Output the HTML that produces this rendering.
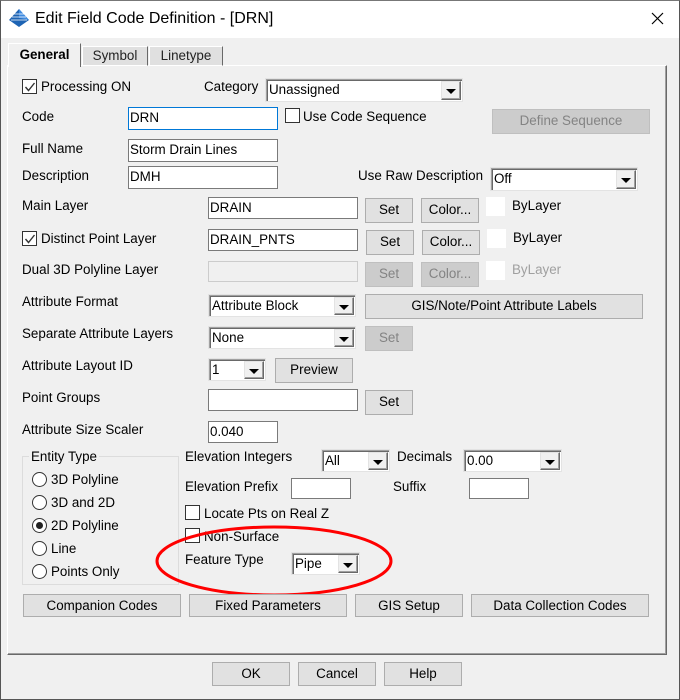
<!DOCTYPE html>
<html><head><meta charset="utf-8"><style>
*{box-sizing:border-box;margin:0;padding:0}
body{width:680px;height:700px;background:#f0f0f0;font-family:"Liberation Sans",Arial,sans-serif;font-size:13.4px;color:#000;position:relative;overflow:hidden}
.a{position:absolute;white-space:nowrap}
.l{position:absolute;white-space:nowrap;line-height:15px}
.in{position:absolute;background:#fff;border:1px solid #7a7a7a;padding:2px 1px;line-height:15px}
.in.dis{background:#f0f0f0;border-color:#ccc}
.btn{position:absolute;background:#e1e1e1;border:1px solid #adadad;text-align:center;line-height:21px}
.btn.dis{background:#ccc;border-color:#bfbfbf;color:#838383}
.sel{position:absolute;background:#fff;border:1px solid #e3e3e3;box-shadow:inset 1px 1px 0 #a0a0a0,inset 2px 2px 0 #696969;padding:3px 3px;line-height:15px}
.sel .ar{position:absolute;right:1px;top:2px;bottom:1px;width:20px;background:#f0f0f0;border-top:1px solid #e3e3e3;border-left:1px solid #e3e3e3;border-right:1px solid #696969;border-bottom:1px solid #696969;box-shadow:inset -1px -1px 0 #a0a0a0}
.sel .ar:after{content:"";position:absolute;left:4px;top:7px;border-left:5px solid transparent;border-right:5px solid transparent;border-top:5px solid #000}
.cb{position:absolute;width:15px;height:15px;border:1px solid #333;background:#fff}
.rd{position:absolute;width:15px;height:15px;border:1px solid #333;border-radius:50%;background:#fff}
.wb{position:absolute;width:19px;height:19px;background:#fff}
</style></head><body>
<div class="a" style="left:0;top:0;width:680px;height:38px;background:#fff"></div>
<svg class="a" style="left:9px;top:9px" width="20" height="18" viewBox="0 0 20 18"><polygon points="10,0 20,11 10,18 0,11" fill="#1e64b4"/><polygon points="10,0 20,11 10,9" fill="#3f8be0"/><path d="M3,8 H17 M5,5 H15 M2,11H18" stroke="#fff" stroke-width="0.8"/></svg>
<div class="a" style="left:35px;top:9px;font-size:16px;line-height:20px">Edit Field Code Definition - [DRN]</div>
<svg class="a" style="left:651px;top:12px" width="13" height="13"><path d="M1,1L12,12M12,1L1,12" stroke="#000" stroke-width="1.2"/></svg>
<div class="a" style="left:0;top:0;width:680px;height:700px;border:1px solid #555;border-top:1px solid #777"></div>
<div class="a" style="left:7px;top:65px;width:660px;height:590px;border:1px solid #fff;border-right-color:#696969;border-bottom-color:#696969;box-shadow:inset -1px -1px 0 #a0a0a0"></div>
<div class="a" style="left:82px;top:46px;width:66px;height:20px;background:#e0e0e0;border:1px solid #fff;border-right-color:#696969;text-align:center;line-height:18px;color:#222">Symbol</div>
<div class="a" style="left:149px;top:46px;width:74px;height:20px;background:#e0e0e0;border:1px solid #fff;border-right-color:#696969;text-align:center;line-height:18px;color:#222">Linetype</div>
<div class="a" style="left:8px;top:43px;width:73px;height:24px;background:#f0f0f0;border:1px solid #fff;border-bottom:none;border-right-color:#696969;text-align:center;line-height:22px;font-weight:bold">General</div>

<div class="cb" style="left:22px;top:79px"></div><svg class="a" style="left:24px;top:81px" width="12" height="12"><path d="M1.5,6 L4.5,9.5 L10.5,2" stroke="#333" stroke-width="1.4" fill="none"/></svg>
<div class="l" style="left:41px;top:79px">Processing ON</div>
<div class="l" style="left:204px;top:79px">Category</div>
<div class="sel" style="left:265px;top:78px;width:198px;height:24px">Unassigned<div class="ar"></div></div>

<div class="l" style="left:22px;top:109px">Code</div>
<div class="in" style="left:128px;top:107px;width:150px;height:23px;border-color:#0078d7">DRN</div>
<div class="cb" style="left:285px;top:108px"></div>
<div class="l" style="left:303px;top:109px">Use Code Sequence</div>
<div class="btn dis" style="left:492px;top:109px;width:158px;height:25px">Define Sequence</div>

<div class="l" style="left:22px;top:141px">Full Name</div>
<div class="in" style="left:128px;top:139px;width:150px;height:23px">Storm Drain Lines</div>
<div class="l" style="left:22px;top:168px">Description</div>
<div class="in" style="left:128px;top:166px;width:150px;height:23px">DMH</div>
<div class="l" style="left:358px;top:168px">Use Raw Description</div>
<div class="sel" style="left:490px;top:167px;width:148px;height:24px">Off<div class="ar"></div></div>

<div class="l" style="left:22px;top:198px">Main Layer</div>
<div class="in" style="left:208px;top:197px;width:150px;height:22px">DRAIN</div>
<div class="btn" style="left:365px;top:198px;width:48px;height:25px">Set</div>
<div class="btn" style="left:421px;top:198px;width:58px;height:25px">Color...</div>
<div class="wb" style="left:486px;top:197px"></div><div class="l" style="left:512px;top:198px">ByLayer</div>

<div class="cb" style="left:22px;top:231px"></div><svg class="a" style="left:24px;top:233px" width="12" height="12"><path d="M1.5,6 L4.5,9.5 L10.5,2" stroke="#333" stroke-width="1.4" fill="none"/></svg>
<div class="l" style="left:41px;top:231px">Distinct Point Layer</div>
<div class="in" style="left:208px;top:229px;width:150px;height:22px">DRAIN_PNTS</div>
<div class="btn" style="left:366px;top:230px;width:48px;height:25px">Set</div>
<div class="btn" style="left:422px;top:230px;width:58px;height:25px">Color...</div>
<div class="wb" style="left:487px;top:229px"></div><div class="l" style="left:513px;top:230px">ByLayer</div>

<div class="l" style="left:22px;top:262px">Dual 3D Polyline Layer</div>
<div class="in dis" style="left:208px;top:261px;width:150px;height:21px"></div>
<div class="btn dis" style="left:365px;top:262px;width:48px;height:25px">Set</div>
<div class="btn dis" style="left:421px;top:262px;width:58px;height:25px">Color...</div>
<div class="wb" style="left:486px;top:261px"></div><div class="l" style="left:512px;top:262px;color:#a0a0a0">ByLayer</div>

<div class="l" style="left:22px;top:294px">Attribute Format</div>
<div class="sel" style="left:208px;top:294px;width:148px;height:23px">Attribute Block<div class="ar"></div></div>
<div class="btn" style="left:365px;top:294px;width:278px;height:25px">GIS/Note/Point Attribute Labels</div>

<div class="l" style="left:22px;top:326px">Separate Attribute Layers</div>
<div class="sel" style="left:208px;top:326px;width:148px;height:23px">None<div class="ar"></div></div>
<div class="btn dis" style="left:365px;top:326px;width:48px;height:25px">Set</div>

<div class="l" style="left:22px;top:358px">Attribute Layout ID</div>
<div class="sel" style="left:208px;top:358px;width:58px;height:23px">1<div class="ar"></div></div>
<div class="btn" style="left:275px;top:358px;width:78px;height:25px">Preview</div>

<div class="l" style="left:22px;top:390px">Point Groups</div>
<div class="in" style="left:208px;top:389px;width:150px;height:22px"></div>
<div class="btn" style="left:365px;top:390px;width:48px;height:25px">Set</div>

<div class="l" style="left:22px;top:422px">Attribute Size Scaler</div>
<div class="in" style="left:208px;top:421px;width:70px;height:22px">0.040</div>

<div class="a" style="left:22px;top:456px;width:157px;height:129px;border:1px solid #dcdcdc"></div>
<div class="l" style="left:29px;top:449px;background:#f0f0f0;padding:0 2px">Entity Type</div>
<div class="rd" style="left:32px;top:472px"></div><div class="l" style="left:51px;top:472px">3D Polyline</div>
<div class="rd" style="left:32px;top:495px"></div><div class="l" style="left:51px;top:495px">3D and 2D</div>
<div class="rd" style="left:32px;top:518px"></div><div class="a" style="left:36px;top:522px;width:7px;height:7px;border-radius:50%;background:#222"></div><div class="l" style="left:51px;top:518px">2D Polyline</div>
<div class="rd" style="left:32px;top:541px"></div><div class="l" style="left:51px;top:541px">Line</div>
<div class="rd" style="left:32px;top:564px"></div><div class="l" style="left:51px;top:564px">Points Only</div>

<div class="l" style="left:185px;top:449px">Elevation Integers</div>
<div class="sel" style="left:321px;top:449px;width:69px;height:23px">All<div class="ar"></div></div>
<div class="l" style="left:397px;top:449px">Decimals</div>
<div class="sel" style="left:463px;top:449px;width:99px;height:23px">0.00<div class="ar"></div></div>
<div class="l" style="left:185px;top:479px">Elevation Prefix</div>
<div class="in" style="left:291px;top:478px;width:60px;height:21px"></div>
<div class="l" style="left:393px;top:479px">Suffix</div>
<div class="in" style="left:469px;top:478px;width:60px;height:21px"></div>
<div class="cb" style="left:185px;top:505px"></div><div class="l" style="left:204px;top:506px">Locate Pts on Real Z</div>
<div class="cb" style="left:185px;top:528px"></div><div class="l" style="left:204px;top:529px">Non-Surface</div>
<div class="l" style="left:185px;top:552px">Feature Type</div>
<div class="sel" style="left:291px;top:552px;width:69px;height:23px">Pipe<div class="ar"></div></div>
<svg class="a" style="left:0;top:0" width="680" height="700"><ellipse cx="274" cy="561" rx="117" ry="34" fill="none" stroke="#f00" stroke-width="3"/></svg>

<div class="btn" style="left:23px;top:594px;width:158px;height:23px">Companion Codes</div>
<div class="btn" style="left:189px;top:594px;width:158px;height:23px">Fixed Parameters</div>
<div class="btn" style="left:355px;top:594px;width:108px;height:23px">GIS Setup</div>
<div class="btn" style="left:471px;top:594px;width:178px;height:23px">Data Collection Codes</div>

<div class="btn" style="left:212px;top:662px;width:78px;height:24px">OK</div>
<div class="btn" style="left:298px;top:662px;width:78px;height:24px">Cancel</div>
<div class="btn" style="left:384px;top:662px;width:78px;height:24px">Help</div>
</body></html>
